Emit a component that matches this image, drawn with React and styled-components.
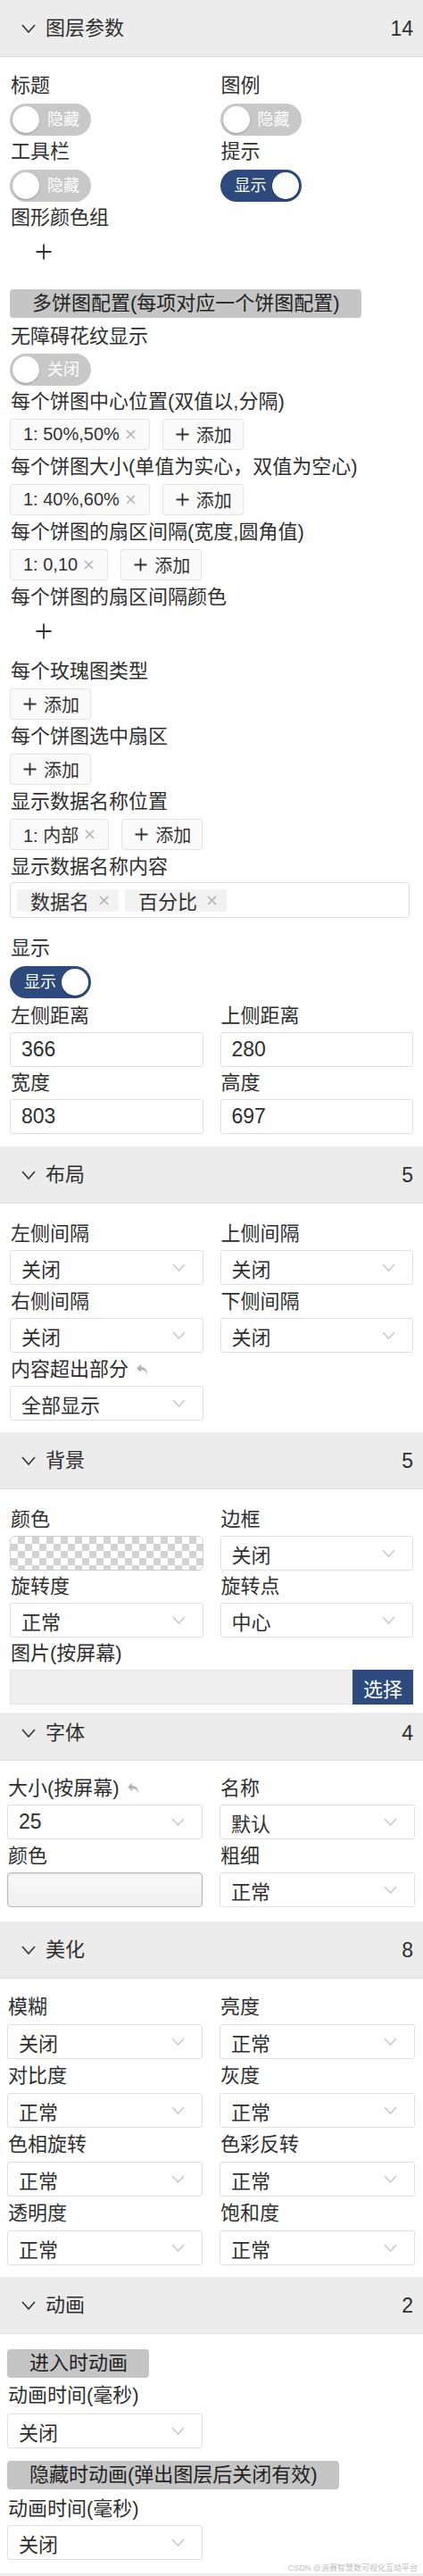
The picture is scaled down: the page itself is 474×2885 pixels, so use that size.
import React from "react";
import styled, { createGlobalStyle } from "styled-components";

const GlobalStyle = createGlobalStyle`
  *, *::before, *::after { box-sizing: border-box; }
  html, body { margin: 0; padding: 0; background: #fff; }
  body {
    font-family: "Liberation Sans", "Noto Sans CJK SC", sans-serif;
    color: #2f2f2f;
  }
`;

const NAVY = "#2c4a7e";

const Page = styled.div`
  width: 474px;
  background: #fff;
`;

const Header = styled.div`
  height: ${(p) => (p.$short ? 54 : 64)}px;
  background: #ececec;
  border-bottom: 1px solid #dcdcdc;
  display: flex;
  align-items: center;
  padding: 0 11px ${(p) => (p.$short ? 8 : 0)}px 24px;
  gap: 11px;
  font-size: 22px;
  line-height: 28px;
  color: #2f2f2f;
`;

const HeaderTitle = styled.div`
  flex: 1;
`;

const HeaderCount = styled.div`
  font-size: 23px;
`;

const Body = styled.div`
  padding: ${(p) => p.$pt}px 0 ${(p) => p.$pb}px;
`;

const Grid = styled.div`
  display: grid;
  grid-template-columns: 1fr 1fr;
  column-gap: 19px;
  padding: 0 ${(p) => p.$r}px 0 ${(p) => p.$l}px;
`;

const Field = styled.div`
  display: flex;
  flex-direction: column;
  align-items: ${(p) => (p.$start ? "flex-start" : "stretch")};
  margin-bottom: ${(p) => p.$mb ?? 4}px;
  grid-column: ${(p) => (p.$span ? "1 / -1" : "auto")};
  min-width: 0;
`;

const Label = styled.div`
  height: 28px;
  line-height: 28px;
  font-size: 22px;
  color: #2f2f2f;
  white-space: nowrap;
  margin-bottom: ${(p) => p.$gap ?? 4}px;
  display: flex;
  align-items: center;
  gap: 8px;
  margin-left: 1px;
`;

const ToggleTrack = styled.div`
  width: 91px;
  height: 36px;
  border-radius: 18px;
  background: ${(p) => (p.$on ? NAVY : "#c8c8c8")};
  display: flex;
  flex-direction: ${(p) => (p.$on ? "row-reverse" : "row")};
  align-items: center;
  justify-content: flex-start;
  padding: 0 3px;
  gap: ${(p) => (p.$on ? 6 : 9)}px;
`;

const Knob = styled.div`
  width: 30px;
  height: 30px;
  border-radius: 50%;
  background: #fff;
  box-shadow: 0 1px 2px rgba(0, 0, 0, 0.25);
  flex: none;
`;

const ToggleText = styled.span`
  color: #fff;
  font-size: 18px;
  line-height: 1;
`;

const PlusCell = styled.div`
  width: 48px;
  height: 48px;
  margin-left: 14px;
  display: flex;
  align-items: center;
  justify-content: center;
`;

const GroupBar = styled.div`
  grid-column: 1 / -1;
  justify-self: start;
  height: 32px;
  line-height: 32px;
  padding: 0 24px 0 25px;
  background: #c5c5c5;
  border-radius: 4px;
  font-size: 22px;
  color: #222;
  white-space: nowrap;
  margin: ${(p) => p.$mt ?? 0}px 0 ${(p) => p.$mb ?? 0}px;
`;

const TagRow = styled.div`
  display: flex;
  gap: 14px;
`;

const Tag = styled.div`
  height: 35px;
  display: flex;
  align-items: center;
  gap: 7px;
  padding: 0 15px 0 14px;
  background: #fafafa;
  border: 1px solid #e4e4e4;
  border-radius: 3px;
  font-size: 20px;
  color: #333;
  white-space: nowrap;
`;

const AddButton = styled(Tag)`
  gap: 8px;
  padding: 0 12px 0 14px;
`;

const MultiBox = styled.div`
  height: 40px;
  width: 448px;
  border: 1px solid #dedede;
  border-radius: 3px;
  background: #fff;
  display: flex;
  align-items: center;
  gap: 7px;
  padding: 0 7px;
`;

const Chip = styled.div`
  height: 25px;
  display: flex;
  align-items: center;
  gap: 11px;
  padding: 0 11px 0 15px;
  background: #f2f2f2;
  border-radius: 2px;
  font-size: 22px;
  color: #333;
`;

const Box = styled.div`
  height: 39px;
  border: 1px solid #e1e1e1;
  border-radius: 3px;
  background: #fff;
  display: flex;
  align-items: center;
  justify-content: space-between;
  padding: 0 19px 0 12px;
  font-size: ${(p) => (p.$num ? 23 : 22)}px;
  color: #2f2f2f;
`;

const Checker = styled.div`
  height: 39px;
  border: 1px solid #cfcfcf;
  border-radius: 6px;
  background-color: #fff;
  background-image: conic-gradient(
    #d2d2d2 25%,
    #fff 0 50%,
    #d2d2d2 0 75%,
    #fff 0
  );
  background-size: 16px 16px;
`;

const ColorWell = styled.div`
  height: 39px;
  border: 1px solid #b9b9b9;
  border-radius: 4px;
  background: linear-gradient(#f9f9f9, #efefef);
  box-shadow: inset 0 1px 2px rgba(0, 0, 0, 0.12);
`;

const FileRow = styled.div`
  height: 39px;
  display: flex;
`;

const FileInput = styled.div`
  flex: 1;
  background: #efefef;
  border: 1px solid #e4e4e4;
  border-right: none;
`;

const PickButton = styled.div`
  width: 68px;
  background: ${NAVY};
  color: #fff;
  font-size: 22px;
  display: flex;
  align-items: center;
  justify-content: center;
`;

const Footer = styled.div`
  margin-top: 3px;
  height: 15px;
  border-bottom: 3px solid #ededed;
  text-align: right;
  padding-right: 6px;
  font-size: 9px;
  line-height: 12px;
  color: #c2c2c2;
  white-space: nowrap;
`;

/* ---------- icons ---------- */

const HeaderChevron = () => (
  <svg width="16" height="10" viewBox="0 0 16 10">
    <polyline points="1,1 8,9 15,1" fill="none" stroke="#333" strokeWidth="1.6" />
  </svg>
);

const SelectChevron = () => (
  <svg width="15" height="9" viewBox="0 0 15 9">
    <polyline points="1,1 7.5,8 14,1" fill="none" stroke="#c2c2c2" strokeWidth="1.2" />
  </svg>
);

const BigPlus = () => (
  <svg width="18" height="18" viewBox="0 0 18 18">
    <path d="M9 0.5v17M0.5 9h17" stroke="#333" strokeWidth="1.8" />
  </svg>
);

const SmallPlus = () => (
  <svg width="15" height="15" viewBox="0 0 15 15">
    <path d="M7.5 0.5v14M0.5 7.5h14" stroke="#333" strokeWidth="1.8" />
  </svg>
);

const CloseX = () => (
  <svg width="11" height="11" viewBox="0 0 11 11">
    <path d="M1 1l9 9M10 1l-9 9" stroke="#aaa" strokeWidth="1.3" />
  </svg>
);

const ResetIcon = () => (
  <svg width="15" height="14" viewBox="0 0 15 14">
    <path
      d="M6 1 L1 5.5 L6 10 V7.3 C9.5 7.3 11.8 8.4 13 12.5 C13.2 7 10.5 4 6 3.9 Z"
      fill="#b3b3b3"
    />
  </svg>
);

/* ---------- building blocks ---------- */

const SectionHeader = ({ title, count, short }) => (
  <Header $short={short}>
    <HeaderChevron />
    <HeaderTitle>{title}</HeaderTitle>
    <HeaderCount>{count}</HeaderCount>
  </Header>
);

const Toggle = ({ on, text }) => (
  <ToggleTrack $on={on}>
    <Knob />
    <ToggleText>{text}</ToggleText>
  </ToggleTrack>
);

const Select = ({ value, num }) => (
  <Box $num={num}>
    <span>{value}</span>
    <SelectChevron />
  </Box>
);

const TextInput = ({ value }) => (
  <Box $num>
    <span>{value}</span>
  </Box>
);

const ValueTag = ({ text }) => (
  <Tag>
    <span>{text}</span>
    <CloseX />
  </Tag>
);

const Add = () => (
  <AddButton>
    <SmallPlus />
    <span>添加</span>
  </AddButton>
);

const SelectGrid = ({ items, gap, mb }) =>
  items.map(([label, value, reset]) => (
    <Field key={label} $mb={mb}>
      <Label $gap={gap}>
        {label}
        {reset && <ResetIcon />}
      </Label>
      <Select value={value} num={/^\d+$/.test(value)} />
    </Field>
  ));

export default function App() {
  return (
    <Page>
      <GlobalStyle />

      <SectionHeader title="图层参数" count="14" />
      <Body $pt={18} $pb={10}>
        <Grid $l={11} $r={11}>
          <Field $start $mb={4}>
            <Label $gap={6}>标题</Label>
            <Toggle text="隐藏" />
          </Field>
          <Field $start $mb={4}>
            <Label $gap={6}>图例</Label>
            <Toggle text="隐藏" />
          </Field>
          <Field $start $mb={4}>
            <Label $gap={6}>工具栏</Label>
            <Toggle text="隐藏" />
          </Field>
          <Field $start $mb={4}>
            <Label $gap={6}>提示</Label>
            <Toggle on text="显示" />
          </Field>

          <Field $span $start $mb={7}>
            <Label $gap={0}>图形颜色组</Label>
            <PlusCell>
              <BigPlus />
            </PlusCell>
          </Field>

          <GroupBar $mt={11} $mb={7}>多饼图配置(每项对应一个饼图配置)</GroupBar>

          <Field $span $start $mb={4}>
            <Label $gap={5}>无障碍花纹显示</Label>
            <Toggle text="关闭" />
          </Field>
          <Field $span $start $mb={5}>
            <Label $gap={5}>每个饼图中心位置(双值以,分隔)</Label>
            <TagRow>
              <ValueTag text="1: 50%,50%" />
              <Add />
            </TagRow>
          </Field>
          <Field $span $start $mb={5}>
            <Label $gap={5}>每个饼图大小(单值为实心，双值为空心)</Label>
            <TagRow>
              <ValueTag text="1: 40%,60%" />
              <Add />
            </TagRow>
          </Field>
          <Field $span $start $mb={5}>
            <Label $gap={5}>每个饼图的扇区间隔(宽度,圆角值)</Label>
            <TagRow>
              <ValueTag text="1: 0,10" />
              <Add />
            </TagRow>
          </Field>
          <Field $span $start $mb={7}>
            <Label $gap={0}>每个饼图的扇区间隔颜色</Label>
            <PlusCell>
              <BigPlus />
            </PlusCell>
          </Field>
          <Field $span $start $mb={5}>
            <Label $gap={5}>每个玫瑰图类型</Label>
            <TagRow>
              <Add />
            </TagRow>
          </Field>
          <Field $span $start $mb={5}>
            <Label $gap={5}>每个饼图选中扇区</Label>
            <TagRow>
              <Add />
            </TagRow>
          </Field>
          <Field $span $start $mb={5}>
            <Label $gap={5}>显示数据名称位置</Label>
            <TagRow>
              <ValueTag text="1: 内部" />
              <Add />
            </TagRow>
          </Field>
          <Field $span $start $mb={20}>
            <Label $gap={3}>显示数据名称内容</Label>
            <MultiBox>
              <Chip>
                <span>数据名</span>
                <CloseX />
              </Chip>
              <Chip>
                <span>百分比</span>
                <CloseX />
              </Chip>
            </MultiBox>
          </Field>
          <Field $span $start $mb={6}>
            <Label $gap={6}>显示</Label>
            <Toggle on text="显示" />
          </Field>

          <Field $mb={4}>
            <Label>左侧距离</Label>
            <TextInput value="366" />
          </Field>
          <Field $mb={4}>
            <Label>上侧距离</Label>
            <TextInput value="280" />
          </Field>
          <Field $mb={4}>
            <Label>宽度</Label>
            <TextInput value="803" />
          </Field>
          <Field $mb={4}>
            <Label>高度</Label>
            <TextInput value="697" />
          </Field>
        </Grid>
      </Body>

      <SectionHeader title="布局" count="5" />
      <Body $pt={20} $pb={8}>
        <Grid $l={11} $r={11}>
          <SelectGrid
            gap={4}
            mb={5}
            items={[
              ["左侧间隔", "关闭"],
              ["上侧间隔", "关闭"],
              ["右侧间隔", "关闭"],
              ["下侧间隔", "关闭"],
              ["内容超出部分", "全部显示", true],
            ]}
          />
        </Grid>
      </Body>

      <SectionHeader title="背景" count="5" />
      <Body $pt={20} $pb={5}>
        <Grid $l={11} $r={11}>
          <Field $mb={4}>
            <Label>颜色</Label>
            <Checker />
          </Field>
          <SelectGrid
            gap={4}
            mb={4}
            items={[
              ["边框", "关闭"],
              ["旋转度", "正常"],
              ["旋转点", "中心"],
            ]}
          />
          <Field $span $mb={4}>
            <Label>图片(按屏幕)</Label>
            <FileRow>
              <FileInput />
              <PickButton>选择</PickButton>
            </FileRow>
          </Field>
        </Grid>
      </Body>

      <SectionHeader title="字体" count="4" short />
      <Body $pt={17} $pb={11}>
        <Grid $l={8} $r={9}>
          <SelectGrid
            gap={4}
            mb={5}
            items={[
              ["大小(按屏幕)", "25", true],
              ["名称", "默认"],
            ]}
          />
          <Field $mb={5}>
            <Label>颜色</Label>
            <ColorWell />
          </Field>
          <SelectGrid gap={4} mb={5} items={[["粗细", "正常"]]} />
        </Grid>
      </Body>

      <SectionHeader title="美化" count="8" />
      <Body $pt={18} $pb={8}>
        <Grid $l={8} $r={9}>
          <SelectGrid
            gap={5}
            mb={5}
            items={[
              ["模糊", "关闭"],
              ["亮度", "正常"],
              ["对比度", "正常"],
              ["灰度", "正常"],
              ["色相旋转", "正常"],
              ["色彩反转", "正常"],
              ["透明度", "正常"],
              ["饱和度", "正常"],
            ]}
          />
        </Grid>
      </Body>

      <SectionHeader title="动画" count="2" />
      <Body $pt={17} $pb={0}>
        <Grid $l={8} $r={9}>
          <GroupBar $mb={6}>进入时动画</GroupBar>
          <Field $mb={14}>
            <Label $gap={6}>动画时间(毫秒)</Label>
            <Select value="关闭" />
          </Field>
          <GroupBar $mb={8}>隐藏时动画(弹出图层后关闭有效)</GroupBar>
          <Field $mb={0}>
            <Label $gap={4}>动画时间(毫秒)</Label>
            <Select value="关闭" />
          </Field>
        </Grid>
        <Footer>CSDN @迪赛智慧数可视化互动平台</Footer>
      </Body>
    </Page>
  );
}
